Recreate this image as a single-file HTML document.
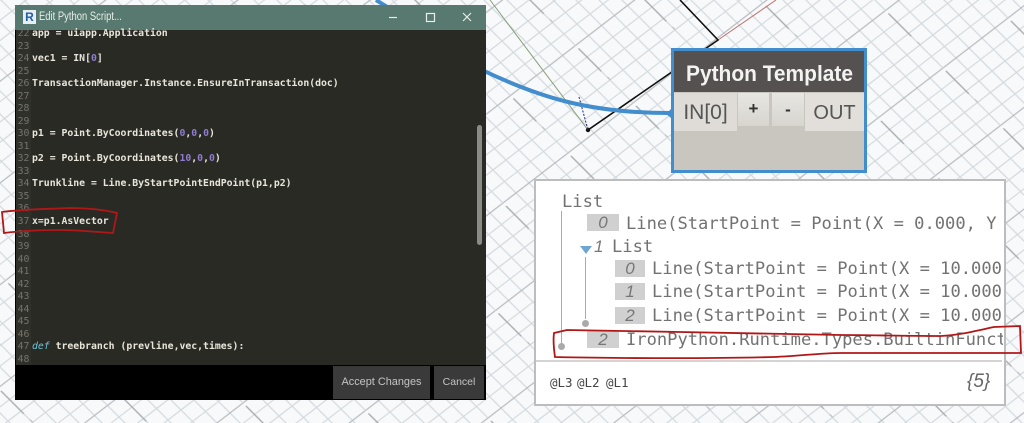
<!DOCTYPE html>
<html><head><meta charset="utf-8">
<style>
html,body{margin:0;padding:0;background:#f8f9fa}
#p{position:relative;width:1024px;height:423px;overflow:hidden;background:#f8f9fa;font-family:"Liberation Sans",sans-serif}
#p>svg.full{position:absolute;left:0;top:0}
.a{position:absolute}
.code{position:absolute;left:32px;margin-top:1px;font:bold 9.8px/12px "DejaVu Sans Mono",monospace;color:#e8e6da;white-space:pre}
.num{position:absolute;left:16px;width:15px;margin-top:1px;text-align:center;font:9.8px/12px "DejaVu Sans Mono",monospace;color:#74746c}
.v{color:#8f7bd0}
.w{position:absolute;margin-top:2px;font:17.1px/20px "DejaVu Sans Mono",monospace;color:#727272;white-space:pre}
.i{position:absolute;background:#d0d0d0;height:17px;text-align:center;font:italic 17px/17px "Liberation Sans",sans-serif;color:#777}
.l{position:absolute;top:375px;font:12.5px/16px "DejaVu Sans Mono",monospace;color:#444}
</style></head><body><div id="p">
<svg class="full" width="1024" height="423" viewBox="0 0 1024 423">
<defs>
<pattern id="g" width="100" height="100" patternUnits="userSpaceOnUse" patternTransform="matrix(.65 -.5 .575 .575 943 68)">
<path d="M0 20H100M0 40H100M0 60H100M0 80H100M20 0V100M40 0V100M60 0V100M80 0V100" stroke="#d3d9dd" stroke-width="1.500" fill="none"/>
<path d="M0 0H100M0 100H100" stroke="#b8bcc0" stroke-width="1.500" fill="none"/>
<path d="M0 45V100M100 45V100" stroke="#d3d9dd" stroke-width="1.500" fill="none"/>
<path d="M0 5V45M100 5V45M0 55V60" stroke="#a8abae" stroke-width="1.700" fill="none"/>
</pattern>
</defs>
<rect width="1024" height="423" fill="#f8f9fa"/>
<rect width="1024" height="423" fill="url(#g)"/>
<path d="M490 0L588 130" stroke="#8aa07e" stroke-width="1" fill="none"/>
<path d="M718 40L776 0" stroke="#c07070" stroke-width="1" fill="none"/>
<path d="M588 130L718 40L680 0" stroke="#111" stroke-width="1.600" fill="none"/>
<circle cx="588" cy="130" r="2.200" fill="#111"/>
<path d="M579 97L588 130" stroke="#1c2a80" stroke-width="1" stroke-dasharray="2 1.500" fill="none"/>
<path d="M376 0L392 10M480 69C540 98 590 113 670 113" stroke="#428dce" stroke-width="4" fill="none"/>
<path d="M674 106L666 114L674 120Z" fill="#428dce"/>
</svg>

<!-- Script window -->
<div class="a" style="left:15px;top:5px;width:471px;height:395px;background:#000"></div>
<div class="a" style="left:15px;top:5px;width:471px;height:25px;background:#57796f"></div>
<div class="a" style="left:23px;top:10px;width:13px;height:14px;background:#e9eef2;color:#1f5fa8;font:bold 12px/14px 'Liberation Sans',sans-serif;text-align:center">R</div>
<div class="a" style="left:39px;top:10px;font:11.500px/15px 'Liberation Sans',sans-serif;color:#e8eeea;transform:scaleX(.82);transform-origin:left;white-space:nowrap">Edit Python Script...</div>
<svg class="a" style="left:386px;top:8px" width="90" height="20" viewBox="0 0 90 20">
<path d="M3 9.500H11" stroke="#e8eeea" stroke-width="1.200" fill="none"/>
<rect x="40.500" y="5.500" width="8" height="8" stroke="#e8eeea" stroke-width="1.200" fill="none"/>
<path d="M77 5L85 13M85 5L77 13" stroke="#e8eeea" stroke-width="1.200" fill="none"/>
</svg>
<div class="a" style="left:16px;top:30px;width:470px;height:335px;background:#2a2a25;overflow:hidden"></div>
<div class="a" style="left:16px;top:30px;width:15px;height:335px;background:#30302b;overflow:hidden"></div>
<div class="a" style="left:477px;top:125px;width:5px;height:120px;border-radius:3px;background:#8a8a88"></div>

<div class="num" style="top:27px">22</div><div class="num" style="top:39.500px">23</div><div class="num" style="top:52px">24</div><div class="num" style="top:64.500px">25</div><div class="num" style="top:77px">26</div><div class="num" style="top:89.500px">27</div><div class="num" style="top:102px">28</div><div class="num" style="top:114.500px">29</div><div class="num" style="top:127px">30</div><div class="num" style="top:139.500px">31</div><div class="num" style="top:152px">32</div><div class="num" style="top:164.500px">33</div><div class="num" style="top:177px">34</div><div class="num" style="top:189.500px">35</div><div class="num" style="top:202px">36</div><div class="num" style="top:215px">37</div><div class="num" style="top:227.500px">38</div><div class="num" style="top:240px">39</div><div class="num" style="top:252.500px">40</div><div class="num" style="top:265px">41</div><div class="num" style="top:277.500px">42</div><div class="num" style="top:290px">43</div><div class="num" style="top:302.500px">44</div><div class="num" style="top:315px">45</div><div class="num" style="top:327.500px">46</div><div class="num" style="top:340px">47</div><div class="num" style="top:353px">48</div>

<div class="code" style="top:27px">app = uiapp.Application</div>
<div class="code" style="top:52px">vec1 = IN[<span class="v">0</span>]</div>
<div class="code" style="top:77px">TransactionManager.Instance.EnsureInTransaction(doc)</div>
<div class="code" style="top:127px">p1 = Point.ByCoordinates(<span class="v">0</span>,<span class="v">0</span>,<span class="v">0</span>)</div>
<div class="code" style="top:152px">p2 = Point.ByCoordinates(<span class="v">10</span>,<span class="v">0</span>,<span class="v">0</span>)</div>
<div class="code" style="top:177px">Trunkline = Line.ByStartPointEndPoint(p1,p2)</div>
<div class="code" style="top:215px">x=p1.AsVector</div>
<div class="code" style="top:340px"><span style="color:#6fc3d6;font-style:italic;font-weight:normal">def</span> treebranch (prevline,vec,times):</div>

<div class="a" style="left:333px;top:366px;width:97px;height:33px;background:#3a3a3a;color:#c4c4c4;font:10.900px/33px 'Liberation Sans',sans-serif;text-align:center">Accept Changes</div>
<div class="a" style="left:434px;top:366px;width:50px;height:33px;background:#3a3a3a;color:#c4c4c4;font:10.500px/33px 'Liberation Sans',sans-serif;text-align:center">Cancel</div>

<!-- Node -->
<div class="a" style="left:671px;top:48px;width:190px;height:119px;border:3px solid #428dce;background:#c9c6c0"></div>
<div class="a" style="left:674px;top:51px;width:190px;height:41px;background:#545150"></div>
<svg class="a" style="left:674px;top:51px" width="190" height="41"><text x="12" y="30" font-family="Liberation Sans" font-weight="bold" font-size="22" fill="#f4f3f0" textLength="167" lengthAdjust="spacingAndGlyphs">Python Template</text></svg>
<div class="a" style="left:674px;top:93px;width:63px;height:38px;background:#dfdcd7;color:#555;font:21px/40px 'Liberation Sans',sans-serif;text-align:center">IN[0]</div>
<div class="a" style="left:738px;top:93px;width:31px;height:33px;background:linear-gradient(#e8e6e2,#d8d5cf);color:#333;font:bold 17px/32px 'Liberation Sans',sans-serif;text-align:center">+</div>
<div class="a" style="left:772px;top:93px;width:32px;height:33px;background:linear-gradient(#e8e6e2,#d8d5cf);color:#333;font:bold 17px/34px 'Liberation Sans',sans-serif;text-align:center">-</div>
<div class="a" style="left:805px;top:93px;width:59px;height:38px;background:#e2dfda;color:#555;font:20px/40px 'Liberation Sans',sans-serif;text-align:center">OUT</div>

<!-- Watch -->
<div class="a" style="left:534px;top:179px;width:468px;height:223px;border:2px solid #bdbdbd;background:#fff"></div>
<div class="a" style="left:536px;top:360px;width:466px;height:2px;background:#d4d4d4"></div>
<div class="w" style="left:562px;top:190px">List</div>
<div class="a" style="left:561px;top:211px;width:1px;height:135px;background:#aaa"></div>
<div class="a" style="left:558px;top:343px;width:7px;height:7px;border-radius:50%;background:#aaa"></div>
<div class="i" style="left:587px;top:214px;width:32px">0</div>
<div class="w" style="left:626px;top:212px;width:372px;overflow:hidden">Line(StartPoint = Point(X = 0.000, Y</div>
<svg class="a" style="left:580px;top:246px" width="12" height="8"><path d="M0 0H12L6 8Z" fill="#6fa5d3"/></svg>
<div class="a" style="left:594px;top:237px;font:italic 17px/20px 'Liberation Sans',sans-serif;color:#777">1</div>
<div class="w" style="left:612px;top:235px">List</div>
<div class="a" style="left:585px;top:257px;width:1px;height:62px;background:#aaa"></div>
<div class="a" style="left:582px;top:320px;width:7px;height:7px;border-radius:50%;background:#aaa"></div>
<div class="i" style="left:615px;top:260px;width:30px">0</div>
<div class="w" style="left:652px;top:257px;width:351px;overflow:hidden">Line(StartPoint = Point(X = 10.000</div>
<div class="i" style="left:615px;top:283px;width:30px">1</div>
<div class="w" style="left:652px;top:280px;width:351px;overflow:hidden">Line(StartPoint = Point(X = 10.000</div>
<div class="i" style="left:615px;top:307px;width:30px">2</div>
<div class="w" style="left:652px;top:304px;width:351px;overflow:hidden">Line(StartPoint = Point(X = 10.000</div>
<div class="i" style="left:587px;top:331px;width:32px">2</div>
<div class="w" style="left:626px;top:328px;width:377px;overflow:hidden">IronPython.Runtime.Types.BuiltinFunction</div>
<div class="l" style="left:550px">@L3</div><div class="l" style="left:577px">@L2</div><div class="l" style="left:606px">@L1</div>
<div class="a" style="left:967px;top:371px;font:italic 19px/22px 'Liberation Sans',sans-serif;color:#666">{5}</div>

<svg class="full" width="1024" height="423" viewBox="0 0 1024 423">
<path d="M2 212C25 209 50 209 70 208C90 208 105 210 117 213L113 233C95 232 80 230 60 230C40 230 20 231 4 233Z" fill="none" stroke="#b01818" stroke-width="1.800"/>
<path d="M567 330L554 333C553 340 554 350 555 357C600 358 700 359 774 357C800 356 820 353 841 353L1021 353L1020 326L994 327C975 331 960 335 941 336C900 336 870 335 841 335L680 332L567 330Z" fill="none" stroke="#b01818" stroke-width="1.800"/>
</svg>
</div></body></html>
